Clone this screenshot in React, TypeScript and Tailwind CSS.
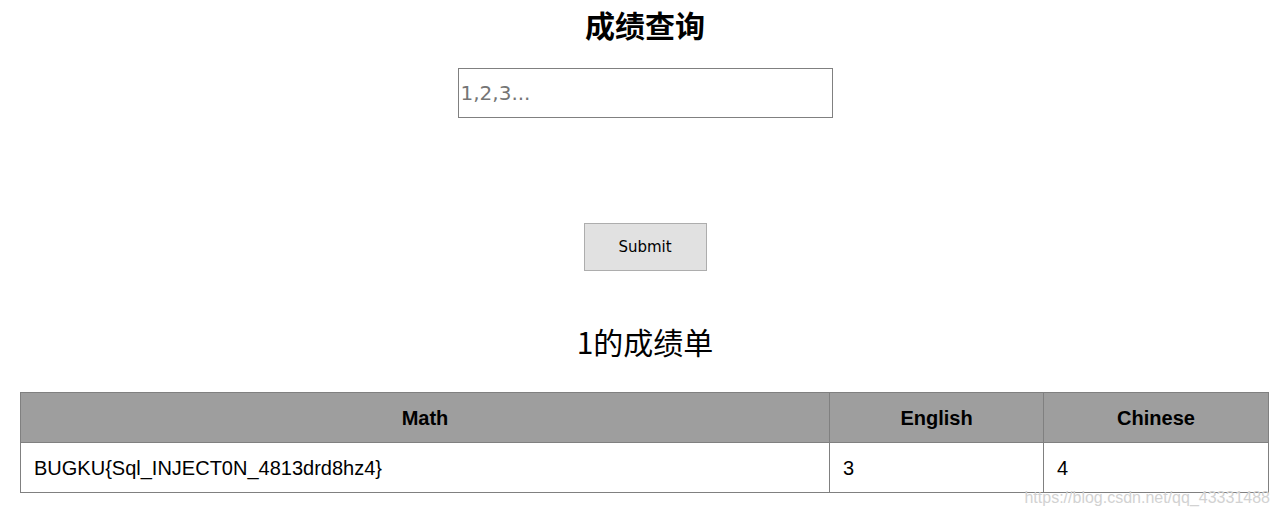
export default function App() {
  const cjk = { fontFamily: '"Microsoft YaHei", "Noto Sans CJK SC", sans-serif' };

  return (
    <div className="relative min-h-[513px] bg-white pl-[11px] text-black">
      <div className="flex flex-col items-center">
        <h1 className="pt-[6px] text-[30px] font-bold leading-[36px]" style={cjk}>
          成绩查询
        </h1>
        <input
          type="text"
          placeholder="1,2,3..."
          className="mt-[26px] h-[50px] w-[375px] border border-[#808080] px-[2px] text-[20px] text-black outline-none placeholder:text-[#757575] font-['DejaVu_Sans',sans-serif]"
        />
        <button
          type="button"
          className="mt-[105px] h-[48px] w-[123px] border border-[#adadad] bg-[#e1e1e1] text-[15px] font-['DejaVu_Sans',sans-serif]"
        >
          Submit
        </button>
        <h2 className="mt-[52px] text-[30px] font-normal leading-[36px]" style={cjk}>
          1的成绩单
        </h2>
      </div>

      <div className="mt-[33px] pl-[9px] pr-[10px]">
        <table className="w-full border-collapse text-[20px] font-['Liberation_Sans',Arial,sans-serif]">
          <colgroup>
            <col className="w-[809px]" />
            <col className="w-[214px]" />
            <col />
          </colgroup>
          <thead>
            <tr className="h-[50px] bg-[#9e9e9e]">
              <th className="border border-[#808080] font-bold">Math</th>
              <th className="border border-[#808080] font-bold">English</th>
              <th className="border border-[#808080] font-bold">Chinese</th>
            </tr>
          </thead>
          <tbody>
            <tr className="h-[50px]">
              <td className="border border-[#808080] pl-[13px]">BUGKU{'{'}Sql_INJECT0N_4813drd8hz4{'}'}</td>
              <td className="border border-[#808080] pl-[13px]">3</td>
              <td className="border border-[#808080] pl-[13px]">4</td>
            </tr>
          </tbody>
        </table>
      </div>

      {/* csdn watermark */}
      <div className="absolute right-[9px] top-[486px] text-[16px] text-[#d2d2d2] font-['Liberation_Sans',Arial,sans-serif]">
        https://blog.csdn.net/qq_43331488
      </div>
    </div>
  );
}
